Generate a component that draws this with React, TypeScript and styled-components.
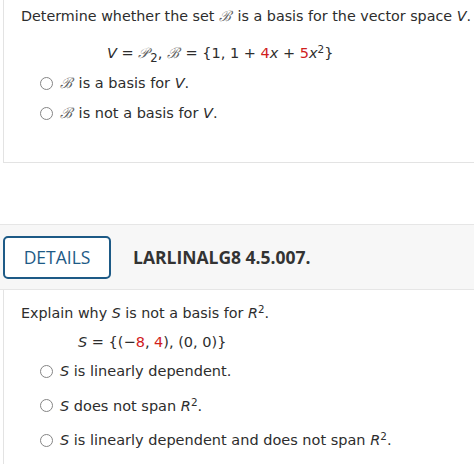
import React from 'react';
import styled, { createGlobalStyle } from 'styled-components';

const GlobalStyle = createGlobalStyle`
  html, body {
    margin: 0;
    padding: 0;
    background: #fff;
  }
  body {
    width: 474px;
    overflow: hidden;
  }
`;

const Page = styled.div`
  width: 474px;
  height: 464px;
  overflow: hidden;
  font-family: 'DejaVu Sans', Verdana, sans-serif;
  color: #2d2d2d;
`;

const Panel = styled.div<{ $height: number; $top: number }>`
  margin-left: 3px;
  height: ${(p) => p.$height}px;
  box-sizing: border-box;
  border-left: 1px solid #e3e3e3;
  border-bottom: 1px solid #e3e3e3;
  padding: ${(p) => p.$top}px 0 0 17px;
`;

const Spacer = styled.div`
  height: 61px;
`;

const Header = styled.div`
  height: 66px;
  box-sizing: border-box;
  background: #f7f7f7;
  border-top: 1px solid #e6e6e6;
  border-bottom: 1px solid #e6e6e6;
  display: flex;
  align-items: center;
  gap: 22px;
  padding-left: 3px;
`;

const DetailsButton = styled.button`
  width: 108px;
  height: 43px;
  box-sizing: border-box;
  border: 2px solid #1d5a86;
  border-radius: 5px;
  background: #fff;
  color: #1d5a86;
  font-family: 'Open Sans', sans-serif;
  font-size: 17.5px;
  padding: 0;
`;

const Code = styled.span`
  font-family: 'Open Sans', sans-serif;
  font-weight: 700;
  font-size: 17.5px;
  color: #333;
`;

const Question = styled.div`
  font-size: 14.3px;
  line-height: 20px;
  white-space: nowrap;
`;

const MathLine = styled.div<{ $indent: number; $top: number }>`
  font-size: 14.5px;
  line-height: 20px;
  margin: ${(p) => p.$top}px 0 0 ${(p) => p.$indent}px;
  white-space: nowrap;
`;

const Options = styled.div<{ $gap: number; $top: number }>`
  display: flex;
  flex-direction: column;
  gap: ${(p) => p.$gap}px;
  margin: ${(p) => p.$top}px 0 0 19px;
`;

const Option = styled.label`
  display: flex;
  align-items: center;
  gap: 7px;
  font-size: 14.5px;
  line-height: 20px;
  white-space: nowrap;
`;

const Radio = styled.span`
  width: 11px;
  height: 11px;
  border: 1px solid #858585;
  border-radius: 50%;
  background: #fff;
  flex: none;
`;

const I = styled.i`
  font-style: italic;
`;

const Red = styled.span`
  color: #d0201c;
`;

const Script = styled.span`
  font-family: 'DejaVu Serif', serif;
  color: #5f5f5f;
  font-style: italic;
  line-height: 0;
  padding-right: 2px;
`;

const Sup = styled.sup`
  font-size: 0.72em;
  vertical-align: 0.5em;
  line-height: 0;
`;

const Sub = styled.sub`
  font-size: 0.8em;
  vertical-align: -0.35em;
  line-height: 0;
`;

const B = () => <Script>ℬ</Script>;

export default function App() {
  return (
    <Page>
      <GlobalStyle />
      <Panel $height={163} $top={6}>
        <Question>
          Determine whether the set <B /> is a basis for the vector space <I>V</I>.
        </Question>
        <MathLine $indent={86} $top={17}>
          <I>V</I> = <Script>𝒫</Script>
          <Sub>2</Sub>, <B /> = {'{'}1, 1 + <Red>4</Red>
          <I>x</I> + <Red>5</Red>
          <I>x</I>
          <Sup>2</Sup>
          {'}'}
        </MathLine>
        <Options $gap={10} $top={10}>
          <Option>
            <Radio />
            <span>
              <B /> is a basis for <I>V</I>.
            </span>
          </Option>
          <Option>
            <Radio />
            <span>
              <B /> is not a basis for <I>V</I>.
            </span>
          </Option>
        </Options>
      </Panel>
      <Spacer />
      <Header>
        <DetailsButton>DETAILS</DetailsButton>
        <Code>LARLINALG8 4.5.007.</Code>
      </Header>
      <Panel $height={200} $top={13}>
        <Question>
          Explain why <I>S</I> is not a basis for <I>R</I>
          <Sup>2</Sup>.
        </Question>
        <MathLine $indent={57} $top={9}>
          <I>S</I> = {'{'}(−<Red>8</Red>, <Red>4</Red>), (0, 0){'}'}
        </MathLine>
        <Options $gap={14.5} $top={9}>
          <Option>
            <Radio />
            <span>
              <I>S</I> is linearly dependent.
            </span>
          </Option>
          <Option>
            <Radio />
            <span>
              <I>S</I> does not span <I>R</I>
              <Sup>2</Sup>.
            </span>
          </Option>
          <Option>
            <Radio />
            <span>
              <I>S</I> is linearly dependent and does not span <I>R</I>
              <Sup>2</Sup>.
            </span>
          </Option>
        </Options>
      </Panel>
    </Page>
  );
}
